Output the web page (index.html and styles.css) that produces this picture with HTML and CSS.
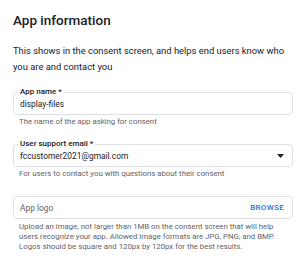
FILE: index.html
```html
<!DOCTYPE html>
<html lang="en">

<head>
  <meta charset="UTF-8" />
  <meta name="viewport" content="width=device-width, initial-scale=1.0" />
  <title>App information</title>
  <link rel="stylesheet" href="styles.css">
</head>

<body>
  <main class="panel">
    <h1 class="titulo">App information</h1>
    <p class="intro">This shows in the consent screen, and helps end users know who you are and contact you</p>

    <div class="campo">
      <div class="caja">
        <span class="etiqueta">App name *</span>
        <span class="valor">display-files</span>
      </div>
      <p class="ayuda">The name of the app asking for consent</p>
    </div>

    <div class="campo">
      <div class="caja">
        <span class="etiqueta">User support email *</span>
        <span class="valor">fccustomer2021@gmail.com</span>
        <svg class="flecha" width="7" height="4" viewBox="0 0 7 4"><path d="M0 0h7L3.5 4z" fill="#202124" /></svg>
      </div>
      <p class="ayuda">For users to contact you with questions about their consent</p>
    </div>

    <div class="campo">
      <div class="caja">
        <span class="valor vacio">App logo</span>
        <span class="boton">BROWSE</span>
      </div>
      <p class="ayuda largo">Upload an image, not larger than 1MB on the consent screen that will help users recognize your app. Allowed image formats are JPG, PNG, and BMP. Logos should be square and 120px by 120px for the best results.</p>
    </div>
  </main>
</body>

</html>
```

FILE: styles.css
```css
:root {
  --color-texto: #202124;
  --color-gris: #5f6368;
  --color-borde: #dfe1e5;
  --color-azul: #1a73e8;
}

* {
  box-sizing: border-box;
}

body {
  margin: 0;
  font-family: Roboto, "Liberation Sans", Arial, sans-serif;
  color: var(--color-texto);
  background: white;
}

.panel {
  padding: 11px 7px 0 13px;
}

.titulo {
  margin: 0;
  font-size: 13.5px;
  line-height: 18px;
  font-weight: 500;
}

.intro {
  margin: 14px 0 0;
  font-size: 9.4px;
  line-height: 16px;
}

.campo {
  margin-top: 17px;
}

.caja {
  position: relative;
  display: flex;
  align-items: center;
  height: 23px;
  padding: 0 8px 0 6px;
  border: 1px solid var(--color-borde);
  border-radius: 4px;
}

.etiqueta {
  position: absolute;
  left: 4px;
  top: -6px;
  padding: 0 2px;
  background: white;
  font-size: 8px;
  line-height: 10px;
  font-weight: 500;
}

.valor {
  flex: 1;
  font-size: 8.4px;
}

.vacio {
  color: var(--color-gris);
}

.boton {
  color: var(--color-azul);
  font-size: 8px;
  font-weight: 500;
  letter-spacing: 0.3px;
}

.ayuda {
  margin: 2px 6px 0;
  font-size: 7.8px;
  line-height: 10px;
  color: var(--color-gris);
}

.largo {
  margin-top: 3px;
}
```
